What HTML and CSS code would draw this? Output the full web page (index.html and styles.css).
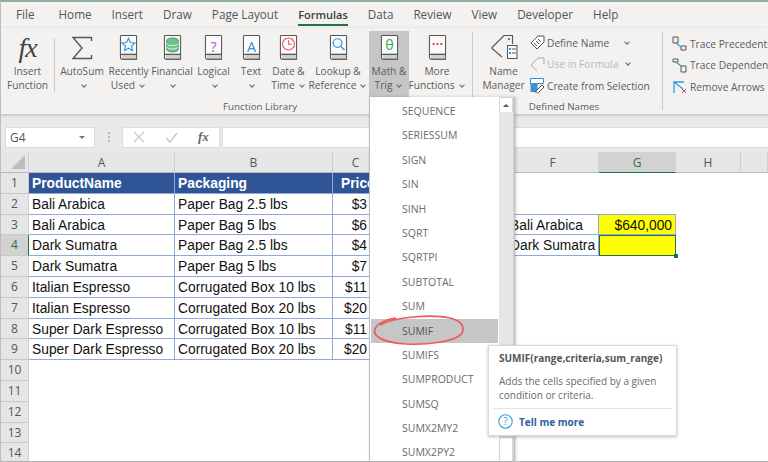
FILE: index.html
```html
<!DOCTYPE html>
<html lang="en">
<head>
<meta charset="utf-8">
<title>Excel Formulas</title>
<link rel="stylesheet" href="styles.css">
</head>
<body>
<svg class="defs" width="0" height="0" aria-hidden="true">
  <symbol id="book" viewBox="0 0 20 28">
    <path d="M1.500 23V2.500a1 1 0 0 1 1-1h15a1 1 0 0 1 1 1V26.500H3a1.700 1.700 0 0 1-1.500-1.800V23a1.700 1.700 0 0 1 1.500-1.700h15.500" fill="#fbfbfb" stroke="#555" stroke-width="1.100"/>
    <path d="M3 22h15v4H3z" fill="#cfcfcf"/>
    <path d="M2.500 21.500H18.500M3 26.500H18.500" stroke="#555" fill="none"/>
  </symbol>
</svg>
<div class="app">
  <nav class="tabs">
    <span class="tab tab-file">File</span><span class="tab">Home</span><span class="tab">Insert</span><span class="tab">Draw</span><span class="tab">Page Layout</span><span class="tab tab-on">Formulas</span><span class="tab">Data</span><span class="tab">Review</span><span class="tab">View</span><span class="tab">Developer</span><span class="tab">Help</span>
  </nav>
  <section class="ribbon">
    <div class="group g-insert">
      <div class="cmd w-insert">
        <span class="ico"><span class="fx-big">fx</span></span>
        <span class="lbl">Insert<br>Function</span>
      </div>
    </div>
    <div class="group g-lib">
      <div class="cmds">
        <div class="cmd w-auto"><span class="ico"><svg width="22" height="24" viewBox="0 0 22 24"><path d="M20.500 5V1.500H2l9 10.500-9 10.500h18.500V19" fill="none" stroke="#555" stroke-width="1.400"/></svg></span><span class="lbl">AutoSum<br><i class="chev"></i></span></div>
        <div class="cmd w-rec"><span class="ico"><svg class="book" viewBox="0 0 20 28"><use href="#book"/><path d="M10 4.500l2 4.500 4.800.500-3.600 3.200 1 4.800L10 15 5.800 17.500l1-4.800L3.200 9.500 8 9z" fill="none" stroke="#2f9ae0" stroke-width="1.200"/></svg></span><span class="lbl">Recently<br>Used<i class="chev"></i></span></div>
        <div class="cmd w-fin"><span class="ico"><svg class="book" viewBox="0 0 20 28"><use href="#book"/><ellipse cx="10" cy="6.500" rx="6" ry="2.300" fill="#6fc28b" stroke="#2f9e57"/><path d="M4 6.500v10c0 1.300 2.700 2.300 6 2.300s6-1 6-2.300v-10" fill="#6fc28b" stroke="#2f9e57"/><path d="M4 10c0 1.300 2.700 2.300 6 2.300s6-1 6-2.300M4 13.500c0 1.300 2.700 2.300 6 2.300s6-1 6-2.300" fill="none" stroke="#e8f5ec"/></svg></span><span class="lbl">Financial<br><i class="chev"></i></span></div>
        <div class="cmd w-log"><span class="ico"><svg class="book" viewBox="0 0 20 28"><use href="#book"/><text class="g-text g-purple" x="10" y="18.500">?</text></svg></span><span class="lbl">Logical<br><i class="chev"></i></span></div>
        <div class="cmd w-text"><span class="ico"><svg class="book" viewBox="0 0 20 28"><use href="#book"/><text class="g-text g-blue" x="10" y="18.500">A</text></svg></span><span class="lbl">Text<br><i class="chev"></i></span></div>
        <div class="cmd w-date"><span class="ico"><svg class="book" viewBox="0 0 20 28"><use href="#book"/><circle cx="10" cy="10.500" r="6.300" fill="none" stroke="#ee5a5a" stroke-width="1.200"/><path d="M10 6.500v4.300h3.500" fill="none" stroke="#ee5a5a" stroke-width="1.100"/></svg></span><span class="lbl">Date &amp;<br>Time<i class="chev"></i></span></div>
        <div class="cmd w-look"><span class="ico"><svg class="book" viewBox="0 0 20 28"><use href="#book"/><circle cx="9" cy="9.500" r="4.500" fill="none" stroke="#2f9ae0" stroke-width="1.300"/><path d="M12.300 12.800l4 4" stroke="#2f9ae0" stroke-width="1.500"/></svg></span><span class="lbl">Lookup &amp;<br>Reference<i class="chev"></i></span></div>
        <div class="cmd w-math cmd-on"><span class="ico"><svg class="book" viewBox="0 0 20 28"><use href="#book"/><text class="g-text g-green" x="10" y="17">θ</text></svg></span><span class="lbl">Math &amp;<br>Trig<i class="chev"></i></span></div>
        <div class="cmd w-more"><span class="ico"><svg class="book" viewBox="0 0 20 28"><use href="#book"/><path d="M5 10.500h2M9 10.500h2M13 10.500h2" stroke="#ee3b3b" stroke-width="2"/></svg></span><span class="lbl">More<br>Functions<i class="chev"></i></span></div>
      </div>
      <div class="gname">Function Library</div>
    </div>
    <div class="group g-names">
      <div class="cmds">
        <div class="cmd w-mgr">
          <span class="ico"><svg width="28" height="27" viewBox="0 0 28 27"><path d="M1.500 14L14 1.500h8.500V10M12 23L1.500 14" fill="none" stroke="#555" stroke-width="1.100"/><circle cx="19" cy="5" r="1" fill="#555"/><rect x="17.500" y="11.500" width="9.500" height="13" fill="#f8f8f8" stroke="#555"/><path d="M19 14h2v2h-2zM19 18h2v2h-2z" fill="#3d8fd1"/><path d="M22 15h4M22 19h4" stroke="#555"/></svg></span>
          <span class="lbl">Name<br>Manager</span>
        </div>
        <ul class="minis">
          <li class="mini"><svg class="mico" width="15" height="15" viewBox="0 0 15 15"><path d="M1 8L8 1h6v6l-7 7zM4 8l3 3M6 6l3 3M8 4l3 3" fill="#fff" stroke="#555"/></svg>Define Name<i class="chev chev-far"></i></li>
          <li class="mini mini-off"><svg class="mico" width="15" height="15" viewBox="0 0 15 15"><path d="M1 8L8 1h6v6M7 14L1 8" fill="none" stroke="#aaa"/></svg>Use in Formula<i class="chev"></i></li>
          <li class="mini"><svg class="mico" width="15" height="15" viewBox="0 0 15 15"><path d="M.5.500h13v5H.500z" fill="#fff" stroke="#3d8fd1"/><path d="M.5 5h7v9h-7z" fill="#3d8fd1"/><path d="M6 13l6-6 2 2-6 6H6z" fill="#fff" stroke="#555"/></svg>Create from Selection</li>
        </ul>
      </div>
      <div class="gname">Defined Names</div>
    </div>
    <div class="group g-audit">
      <ul class="minis">
        <li class="mini"><svg class="mico" width="15" height="15" viewBox="0 0 15 15"><path d="M1 1h5v6H1zM9 10h5v4H9z" fill="none" stroke="#555"/><path d="M4 7l5 4" stroke="#2f9ae0" stroke-width="1.300"/></svg>Trace Precedents</li>
        <li class="mini"><svg class="mico" width="15" height="15" viewBox="0 0 15 15"><path d="M1 1h5v3H1zM9 8h5v6H9z" fill="none" stroke="#555"/><path d="M4 4l5 4" stroke="#2f9ae0" stroke-width="1.300"/></svg>Trace Dependents</li>
        <li class="mini"><svg class="mico" width="15" height="15" viewBox="0 0 15 15"><path d="M2 14V3h10M2 3l9 7" fill="none" stroke="#2f9ae0" stroke-width="1.300"/><path d="M10 10l4 4M14 10l-4 4" stroke="#e04a4a"/></svg>Remove Arrows</li>
      </ul>
    </div>
  </section>
  <section class="fbar">
    <div class="namebox"><span>G4</span><i class="tri"></i></div>
    <div class="grip"></div>
    <div class="fbtns">
      <svg width="12" height="12" viewBox="0 0 12 12"><path d="M1 1l10 10M11 1L1 11" stroke="#c8c8c8" stroke-width="1.300"/></svg>
      <svg width="13" height="12" viewBox="0 0 13 12"><path d="M1 7l4 4 7-9" fill="none" stroke="#c8c8c8" stroke-width="1.500"/></svg>
      <span class="fx-small">fx</span>
    </div>
    <div class="finput"></div>
  </section>
  <section class="sheet">
    <div class="corner"><i></i></div>
    <div class="ch">A</div><div class="ch">B</div><div class="ch">C</div><div class="ch"></div><div class="ch"></div><div class="ch">F</div><div class="ch ch-on">G</div><div class="ch">H</div><div class="ch"></div>

    <div class="rh">1</div><div class="c hd">ProductName</div><div class="c hd">Packaging</div><div class="c hd hd-price">Price</div><div class="c"></div><div class="c"></div><div class="c"></div><div class="c"></div><div class="c"></div><div class="c"></div>
    <div class="rh">2</div><div class="c t">Bali Arabica</div><div class="c t">Paper Bag 2.5 lbs</div><div class="c t num">$3</div><div class="c"></div><div class="c"></div><div class="c bb"></div><div class="c bb"></div><div class="c"></div><div class="c"></div>
    <div class="rh">3</div><div class="c t">Bali Arabica</div><div class="c t">Paper Bag 5 lbs</div><div class="c t num">$6</div><div class="c"></div><div class="c"></div><div class="c t">Bali Arabica</div><div class="c t money yel">$640,000</div><div class="c"></div><div class="c"></div>
    <div class="rh rh-on">4</div><div class="c t">Dark Sumatra</div><div class="c t">Paper Bag 2.5 lbs</div><div class="c t num">$4</div><div class="c"></div><div class="c"></div><div class="c t">Dark Sumatra</div><div class="c t yel sel"><i class="handle"></i></div><div class="c"></div><div class="c"></div>
    <div class="rh">5</div><div class="c t">Dark Sumatra</div><div class="c t">Paper Bag 5 lbs</div><div class="c t num">$7</div><div class="c"></div><div class="c"></div><div class="c"></div><div class="c"></div><div class="c"></div><div class="c"></div>
    <div class="rh">6</div><div class="c t">Italian Espresso</div><div class="c t">Corrugated Box 10 lbs</div><div class="c t num">$11</div><div class="c"></div><div class="c"></div><div class="c"></div><div class="c"></div><div class="c"></div><div class="c"></div>
    <div class="rh">7</div><div class="c t">Italian Espresso</div><div class="c t">Corrugated Box 20 lbs</div><div class="c t num">$20</div><div class="c"></div><div class="c"></div><div class="c"></div><div class="c"></div><div class="c"></div><div class="c"></div>
    <div class="rh">8</div><div class="c t">Super Dark Espresso</div><div class="c t">Corrugated Box 10 lbs</div><div class="c t num">$11</div><div class="c"></div><div class="c"></div><div class="c"></div><div class="c"></div><div class="c"></div><div class="c"></div>
    <div class="rh">9</div><div class="c t">Super Dark Espresso</div><div class="c t">Corrugated Box 20 lbs</div><div class="c t num">$20</div><div class="c"></div><div class="c"></div><div class="c"></div><div class="c"></div><div class="c"></div><div class="c"></div>
    <div class="rh">10</div><div class="c"></div><div class="c"></div><div class="c"></div><div class="c"></div><div class="c"></div><div class="c"></div><div class="c"></div><div class="c"></div><div class="c"></div>
    <div class="rh">11</div><div class="c"></div><div class="c"></div><div class="c"></div><div class="c"></div><div class="c"></div><div class="c"></div><div class="c"></div><div class="c"></div><div class="c"></div>
    <div class="rh">12</div><div class="c"></div><div class="c"></div><div class="c"></div><div class="c"></div><div class="c"></div><div class="c"></div><div class="c"></div><div class="c"></div><div class="c"></div>
    <div class="rh">13</div><div class="c"></div><div class="c"></div><div class="c"></div><div class="c"></div><div class="c"></div><div class="c"></div><div class="c"></div><div class="c"></div><div class="c"></div>
    <div class="rh">14</div><div class="c"></div><div class="c"></div><div class="c"></div><div class="c"></div><div class="c"></div><div class="c"></div><div class="c"></div><div class="c"></div><div class="c"></div>
  </section>

  <div class="menu">
    <ul class="mlist">
      <li>SEQUENCE</li><li>SERIESSUM</li><li>SIGN</li><li>SIN</li><li>SINH</li><li>SQRT</li><li>SQRTPI</li><li>SUBTOTAL</li><li>SUM</li><li class="m-on">SUMIF</li><li>SUMIFS</li><li>SUMPRODUCT</li><li>SUMSQ</li><li>SUMX2MY2</li><li>SUMX2PY2</li>
    </ul>
    <div class="scroll">
      <div class="sup"><i></i></div>
      <div class="strack"></div>
      <div class="sthumb"></div>
    </div>
    <svg class="ring" width="94" height="33" viewBox="0 0 94 33"><path d="M8 11C22 3 60 0 78 4c12 3 15 9 12 15-6 9-36 12-56 11C14 29 0 23 3 15 5 10 12 6 24 4" fill="none" stroke="#ec5a5f" stroke-width="1.700"/></svg>
  </div>
  <aside class="tip">
    <div class="tip-title">SUMIF(range,criteria,sum_range)</div>
    <p class="tip-body">Adds the cells specified by a given condition or criteria.</p>
    <div class="tip-more"><svg width="15" height="15" viewBox="0 0 15 15"><circle cx="7.500" cy="7.500" r="6.700" fill="none" stroke="#3a9bdc" stroke-width="1.100"/><text class="tip-q" x="7.500" y="11">?</text></svg><span>Tell me more</span></div>
  </aside>
</div>
</body>
</html>
```
FILE: styles.css
```css
* { box-sizing: border-box; }
html, body { margin: 0; padding: 0; width: 768px; height: 462px; overflow: hidden; background: #fff; }
.defs { position: absolute; }
ul { list-style: none; margin: 0; padding: 0; }
.app {
  position: relative; width: 768px; height: 462px; overflow: hidden;
  display: flex; flex-direction: column;
  border-left: 1px solid #bdbdbd; border-bottom: 1px solid #b5b5b5; border-top: 2px solid #8fae9c;
  font-family: "Open Sans", "Noto Sans", sans-serif; color: #5c5c5c;
  background: #f3f2f1;
}
.tabs { height: 26px; flex: none; display: flex; gap: 20px; padding-left: 15px; font-size: 11.700px; line-height: 25px; color: #555; }
.tab { height: 24px; white-space: nowrap; }
.tab-file { margin-right: 4px; }
.tab-on { font-size: 11px; font-weight: 600; color: #3c3c3c; border-bottom: 2px solid #217346; }

.ribbon { height: 86px; flex: none; display: flex; font-size: 10.200px; line-height: 14.300px; box-shadow: 0 1px 3px rgba(0,0,0,.22); position: relative; z-index: 1; background: #f3f2f1; }
.group { display: flex; flex-direction: column; position: relative; }
.g-insert { width: 54px; }
.g-insert::after, .g-lib::after, .g-names::after { content: ""; position: absolute; right: 0; top: 10px; height: 54px; width: 1px; background: #c9c9c9; }
.g-lib { width: 418px; }
.g-lib::after { height: 68px; top: 4px; }
.g-names { width: 190px; }
.g-names::after { height: 78px; top: 4px; }
.g-audit { flex: 1; padding: 5px 0 0 9px; overflow: hidden; }
.g-audit .mini { gap: 3px; }
.cmds { display: flex; height: 69px; }
.cmd { height: 66px; padding-top: 1px; flex: none; display: flex; flex-direction: column; align-items: center; text-align: center; white-space: nowrap; margin-top: 3px; }
.ico { height: 31px; display: flex; align-items: center; justify-content: center; }
.lbl { display: block; margin-top: 1px; }
.cmd-on { background: #c6c6c6; }
.book { width: 19px; height: 26.600px; }
.g-text { font-family: "Open Sans", sans-serif; font-size: 15px; text-anchor: middle; }
.g-purple { fill: #b44fc6; }
.g-blue { fill: #2f8fdc; }
.g-green { fill: #2fa85a; }
.w-insert { width: 53px; margin-top: 3px; }
.w-auto { width: 50px; margin-left: 2px; }
.w-rec { width: 43px; }
.w-fin { width: 44px; }
.w-log { width: 39px; }
.w-text { width: 36px; }
.w-date { width: 39px; }
.w-look { width: 60px; }
.w-math { width: 40px; margin-left: 1px; }
.w-more { width: 54px; margin-left: 1px; }
.w-mgr { width: 53px; margin-left: 4px; }
.chev { display: inline-block; width: 4px; height: 4px; border-right: 1px solid #666; border-bottom: 1px solid #666; transform: rotate(45deg); margin: 0 2px 3px 5px; vertical-align: middle; }
.mini .chev { flex: none; margin-bottom: 2px; }
.chev-far { margin-left: 14px; }
.fx-big { font-family: "Liberation Serif", serif; font-style: italic; font-size: 28px; color: #444; letter-spacing: -1px; line-height: 31px; }
.gname { position: absolute; left: 0; right: 0; top: 72px; text-align: center; font-size: 9.800px; color: #5c5c5c; }
.g-lib .gname { padding-right: 8px; }
.g-names .gname { padding-left: 2px; padding-right: 10px; }
.minis { display: flex; flex-direction: column; padding-top: 4px; }
.g-audit .minis { padding-top: 0; }
.mini { height: 21.500px; display: flex; align-items: center; gap: 2px; white-space: nowrap; }
.mico { flex: none; }
.mini-off { color: #b9b9b9; }

.fbar { height: 38px; flex: none; display: flex; align-items: center; padding: 8px 0 0 4px; background: #e9e9e9; font-size: 12px; }
.namebox { width: 90px; height: 21px; background: #fff; border: 1px solid #dcdcdc; display: flex; align-items: center; justify-content: space-between; padding: 0 9px 0 4px; color: #555; }
.tri { width: 0; height: 0; border: 3px solid transparent; border-top-color: #777; border-bottom: 0; }
.grip { width: 2px; height: 10px; margin: 0 12px 0 13px; background: repeating-linear-gradient(#b5b5b5 0 2px, transparent 2px 4px); }
.fbtns { width: 98px; height: 21px; background: #fff; border: 1px solid #dcdcdc; display: flex; align-items: center; gap: 20px; padding-left: 10px; }
.fx-small { font-family: "Liberation Serif", serif; font-style: italic; font-size: 13px; font-weight: 700; color: #666; }
.finput { flex: 1; height: 21px; margin-left: 2px; background: #fff; border: 1px solid #dcdcdc; border-right: 0; }

.sheet {
  flex: 1; min-height: 0; display: grid; background: #fff;
  grid-template-columns: 28px 146px 158px 46px 68px 60px 92px 77px 65px 27px;
  grid-template-rows: 21px repeat(14, 20.800px);
  font-family: "Liberation Sans", Arial, sans-serif; font-size: 13.800px; color: #111;
}
.corner { background: #e6e6e6; border-right: 1px solid #d0d0d0; border-bottom: 1px solid #b9b9b9; position: relative; }
.corner i { position: absolute; right: 3px; bottom: 3px; border-style: solid; border-width: 0 0 14px 14px; border-color: transparent transparent #bdbdbd transparent; }
.ch { background: #e6e6e6; border-right: 1px solid #cfcfcf; border-bottom: 1px solid #b9b9b9; text-align: center; font-family: "Open Sans", sans-serif; font-size: 12px; line-height: 21px; color: #555; }
.ch-on { background: #d2d2d2; color: #217346; border-bottom: 1px solid #217346; }
.rh { background: #e6e6e6; border-bottom: 1px solid #c8c8c8; border-right: 1px solid #cfcfcf; text-align: center; font-family: "Open Sans", sans-serif; font-size: 12px; line-height: 20px; color: #555; }
.rh-on { background: #d2d2d2; color: #217346; border-right: 1px solid #217346; }
.c { min-width: 0; white-space: nowrap; overflow: hidden; line-height: 21px; padding: 0 3px; }
.t { border-right: 1px solid #8eaadb; border-bottom: 1px solid #8eaadb; }
.bb { border-bottom: 1px solid #8eaadb; }
.hd { background: #2f5597; color: #fff; font-weight: 700; border-right: 1px solid #8eaadb; border-bottom: 1px solid #8eaadb; }
.hd-price { padding-left: 8px; }
.num { text-align: right; padding-right: 11px; }
.money { text-align: right; }
.yel { background: #ff0; }
.sel { position: relative; overflow: visible; box-shadow: inset 0 0 0 1px #217346; border: 0; }
.handle { position: absolute; right: -2px; bottom: -2px; width: 4px; height: 4px; background: #217346; }

.menu { position: absolute; left: 368px; top: 95px; width: 146px; height: 365px; background: #fff; border: 1px solid #bdbdbd; border-bottom: 0; border-top: 0; z-index: 2; box-shadow: 1px 0 3px rgba(0,0,0,.2); display: flex; }
.mlist { width: 129px; padding-top: 2px; font-size: 10.500px; color: #6b6b6b; }
.mlist li { height: 24.400px; line-height: 24.400px; padding-left: 32px; }
.mlist .m-on { background: #c6c6c6; margin-left: 1px; padding-left: 31px; color: #555; }
.scroll { width: 15px; margin-left: 1px; display: flex; flex-direction: column; border-right: 1px solid #d5d5d5; }
.sup { height: 15px; background: #fff; border: 1px solid #d5d5d5; border-bottom: 0; display: flex; align-items: center; justify-content: center; }
.sup i { border: 3.500px solid transparent; border-bottom-color: #555; border-top: 0; }
.strack { height: 325px; background: #e6e6e6; }
.sthumb { flex: 1; background: #fff; border: 1px solid #d5d5d5; }
.ring { position: absolute; left: 2px; top: 217px; }

.tip { position: absolute; left: 487px; top: 343px; width: 189px; height: 91px; background: #fff; border: 1px solid #d8d8d8; box-shadow: 0 1px 3px rgba(0,0,0,.25); z-index: 3; font-size: 10px; line-height: 14px; padding: 5px 4px 0; color: #6a6a6a; }
.tip-title { padding-left: 6px; font-weight: 700; color: #555; white-space: nowrap; }
.tip-body { margin: 9px 0 5px; padding: 0 6px; height: 35px; border-bottom: 1px solid #e4e4e4; }
.tip-more { display: flex; align-items: center; gap: 6px; padding-left: 5px; font-weight: 700; color: #2f5f9e; }
.tip-q { font-size: 10px; text-anchor: middle; fill: #3a9bdc; font-weight: 400; }
```
